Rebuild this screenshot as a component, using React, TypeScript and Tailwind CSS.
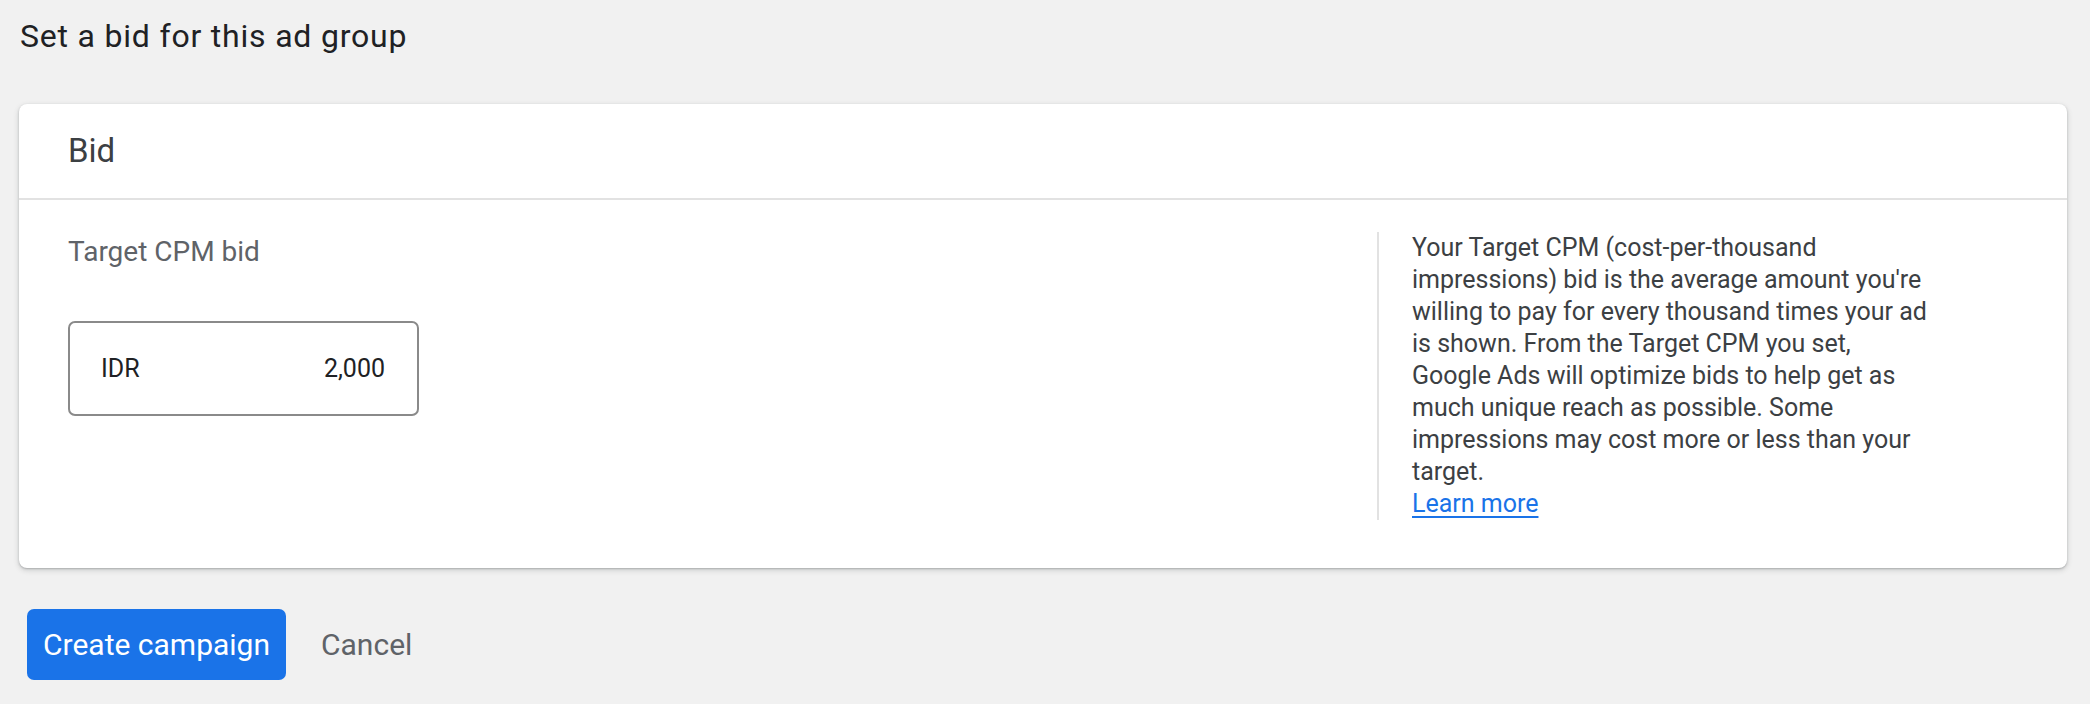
const lines = [
  "Your Target CPM (cost-per-thousand",
  "impressions) bid is the average amount you're",
  "willing to pay for every thousand times your ad",
  "is shown. From the Target CPM you set,",
  "Google Ads will optimize bids to help get as",
  "much unique reach as possible. Some",
  "impressions may cost more or less than your",
  "target.",
];

export default function App() {
  return (
    <div className="min-h-screen w-full bg-[#f1f1f1] font-['Roboto','Liberation_Sans',sans-serif]">
      <h1 className="px-[20px] pt-[16px] h-[104px] text-[32px] leading-[40px] tracking-[0.8px] text-[#202124]">
        Set a bid for this ad group
      </h1>

      <div className="ml-[19px] mr-[23px] bg-white rounded-lg shadow-[0_1px_2px_rgba(60,64,67,0.3),0_2px_5px_1px_rgba(60,64,67,0.15)]">
        <div className="h-[96px] flex items-center px-[49px] border-b-2 border-[#e2e2e2]">
          <h2 className="text-[33px] text-[#3c4043]">Bid</h2>
        </div>

        <div className="flex h-[368px] pt-[32px] pb-[48px]">
          <div className="flex-1 pl-[49px]">
            <div className="text-[28px] leading-[40px] text-[#5f6368]">Target CPM bid</div>
            <div className="mt-[49px] w-[351px] h-[95px] border-2 border-[#8a8a8a] rounded-[7px] flex items-center justify-between pl-[31px] pr-[32px] text-[25px] text-[#202124]">
              <span>IDR</span>
              <span>2,000</span>
            </div>
          </div>

          <div className="w-[690px] border-l-2 border-[#e2e2e2] pl-[33px] text-[25px] leading-[32px] text-[#3c4043]">
            {lines.map((l) => (
              <div key={l}>{l}</div>
            ))}
            <a href="#" className="text-[#1a73e8] underline underline-offset-4">
              Learn more
            </a>
          </div>
        </div>
      </div>

      <div className="flex items-center gap-[35px] pl-[27px] pt-[41px]">
        <button className="h-[71px] px-[16px] rounded-[7px] bg-[#1a73e8] text-white text-[30px]">
          Create campaign
        </button>
        <button className="text-[30px] text-[#5f6368]">Cancel</button>
      </div>
    </div>
  );
}
